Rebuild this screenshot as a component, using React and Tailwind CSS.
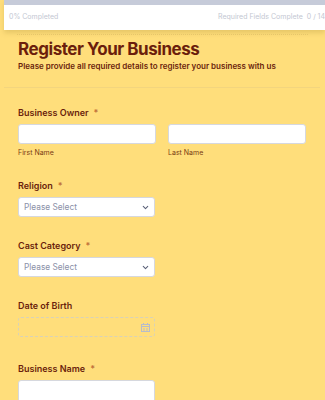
import { ChevronDown } from "lucide-react";

const Label = ({ children, required }) => (
  <div className="text-[9px] font-semibold text-[#6b1e0c] leading-[9px] whitespace-nowrap">
    {children}
    {required && <span className="ml-[5px] text-[#c0703a]">*</span>}
  </div>
);

const TextInput = ({ className = "" }) => (
  <div
    className={`h-[20px] bg-white rounded-[3px] border border-[#d6d8de] ${className}`}
  ></div>
);

const SelectBox = () => (
  <div className="w-[137px] h-[20px] bg-white rounded-[3px] border border-[#d6d8de] flex items-center justify-between pl-[5px] pr-[4px]">
    <span className="text-[8.3px] text-[#8a90a8] leading-none">Please Select</span>
    <ChevronDown size={9} strokeWidth={2.75} className="text-[#5a6078]" />
  </div>
);

const CalendarIcon = () => (
  <svg width="9" height="9" viewBox="0 0 9 9" fill="none" stroke="#b6bccb" strokeWidth="1">
    <rect x="0.5" y="1.5" width="8" height="7" />
    <line x1="0.5" y1="3.5" x2="8.5" y2="3.5" />
    <line x1="2.5" y1="0" x2="2.5" y2="2" />
    <line x1="6.5" y1="0" x2="6.5" y2="2" />
    <line x1="3" y1="5" x2="3" y2="8" />
    <line x1="6" y1="5" x2="6" y2="8" />
  </svg>
);

export default function App() {
  return (
    <div
      className="w-[325px] h-[400px] overflow-hidden bg-[#ffde7b]"
      style={{ fontFamily: "Inter, 'Noto Sans', sans-serif" }}
    >
      <div className="ml-[4px] bg-white shadow-[0_3px_5px_rgba(200,170,80,0.45)]">
        <div className="h-[5px] bg-[#c6cbd9]"></div>
        <div className="h-[25px] flex items-center justify-between pl-[5px] text-[7px] text-[#c3c7d2] whitespace-nowrap">
          <span>0% Completed</span>
          <span>Required Fields Complete&nbsp; 0 / 14</span>
        </div>
      </div>
      <div className="mx-[17px] mt-[4px] border-t border-dotted border-[#e7c66a]"></div>

      <div className="px-[18px] pt-[4px] h-[52px]">
        <h1 className="text-[17px] font-bold tracking-[-0.45px] text-[#6b1e0c] leading-[20px] whitespace-nowrap">
          Register Your Business
        </h1>
        <p className="mt-[2px] text-[8px] font-semibold text-[#6b1e0c] leading-[10px] whitespace-nowrap">
          Please provide all required details to register your business with us
        </p>
      </div>
      <div className="ml-[4px] mr-[5px] border-t border-[#f3d57e]"></div>

      <div className="px-[18px] pt-[20px] flex flex-col">
        <Label required>Business Owner</Label>
        <div className="mt-[7px] flex gap-[12px]">
          <div className="flex flex-col">
            <TextInput className="w-[138px]" />
            <span className="mt-[5px] text-[7px] text-[#7a3b14] leading-[7px]">First Name</span>
          </div>
          <div className="flex flex-col">
            <TextInput className="w-[138px]" />
            <span className="mt-[5px] text-[7px] text-[#7a3b14] leading-[7px]">Last Name</span>
          </div>
        </div>

        <div className="mt-[25px]">
          <Label required>Religion</Label>
          <div className="mt-[7px]">
            <SelectBox />
          </div>
        </div>

        <div className="mt-[24px]">
          <Label required>Cast Category</Label>
          <div className="mt-[7px]">
            <SelectBox />
          </div>
        </div>

        <div className="mt-[24px]">
          <Label>Date of Birth</Label>
          <div className="mt-[7px] w-[137px] h-[20px] rounded-[3px] border border-dashed border-[#d8d2b8] flex items-center justify-end pr-[4px]">
            <CalendarIcon />
          </div>
        </div>

        <div className="mt-[27px]">
          <Label required>Business Name</Label>
          <div className="mt-[7px]">
            <TextInput className="w-[137px] h-[24px]" />
          </div>
        </div>
      </div>
    </div>
  );
}
